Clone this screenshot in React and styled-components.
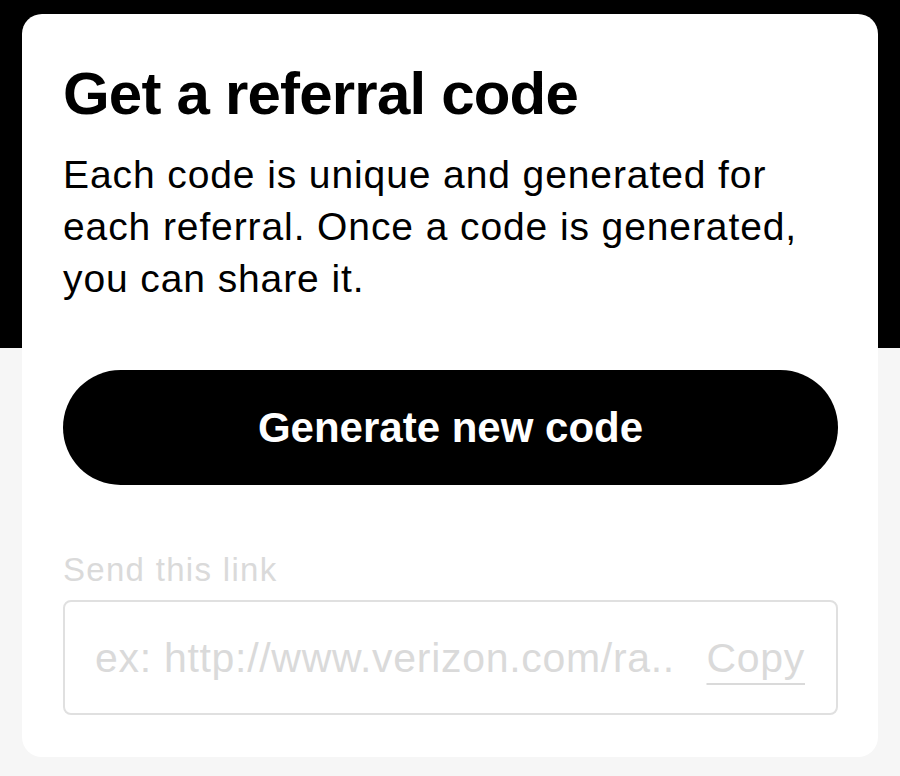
import React from "react";
import styled, { createGlobalStyle } from "styled-components";

const GlobalStyle = createGlobalStyle`
  html, body {
    margin: 0;
    padding: 0;
  }
  body {
    background: linear-gradient(to bottom, #000 0, #000 348px, #f6f6f6 348px);
    min-height: 776px;
    font-family: "Liberation Sans", Arial, sans-serif;
    -webkit-font-smoothing: antialiased;
  }
`;

function App() {
  return (
    <>
      <GlobalStyle />
      <Page>
        <Card>
          <Title>Get a referral code</Title>
          <Description>
            Each code is unique and generated for
            <br />
            each referral. Once a code is generated,
            <br />
            you can share it.
          </Description>
          <GenerateButton type="button">Generate new code</GenerateButton>
          <FieldLabel>Send this link</FieldLabel>
          <LinkField>
            <LinkText>ex: http://www.verizon.com/ra..</LinkText>
            <CopyLink>Copy</CopyLink>
          </LinkField>
        </Card>
      </Page>
    </>
  );
}

const Page = styled.div`
  padding: 14px 22px 20px;
`;

const Card = styled.div`
  background: #fff;
  border-radius: 20px;
  padding: 48px 40px 42px 41px;
  display: flex;
  flex-direction: column;
`;

const Title = styled.h1`
  margin: 0;
  font-size: 60px;
  line-height: 64px;
  font-weight: 700;
  letter-spacing: -0.8px;
  color: #000;
  white-space: nowrap;
`;

const Description = styled.p`
  margin: 23px 0 0;
  font-size: 39px;
  line-height: 52px;
  letter-spacing: 0.9px;
  color: #000;
  white-space: nowrap;
`;

const GenerateButton = styled.button`
  margin-top: 65px;
  height: 115px;
  border: none;
  border-radius: 58px;
  background: #000;
  color: #fff;
  font-family: "Liberation Sans", Arial, sans-serif;
  font-size: 42px;
  font-weight: 700;
  letter-spacing: 0;
  padding: 0;
  cursor: pointer;
`;

const FieldLabel = styled.div`
  margin-top: 67px;
  font-size: 33px;
  line-height: 36px;
  letter-spacing: 1.3px;
  color: #dadada;
`;

const LinkField = styled.div`
  margin-top: 12px;
  height: 115px;
  box-sizing: border-box;
  border: 2px solid #e0e0e0;
  border-radius: 8px;
  display: flex;
  align-items: center;
  justify-content: space-between;
  padding: 2px 31px 0 30px;
`;

const LinkText = styled.span`
  font-size: 41px;
  letter-spacing: 0.7px;
  color: #dadada;
  white-space: nowrap;
  overflow: hidden;
`;

const CopyLink = styled.span`
  font-size: 41px;
  letter-spacing: 0.7px;
  color: #dadada;
  text-decoration: underline;
  text-decoration-thickness: 2px;
  text-underline-offset: 11px;
  text-decoration-skip-ink: none;
`;

export default App;
